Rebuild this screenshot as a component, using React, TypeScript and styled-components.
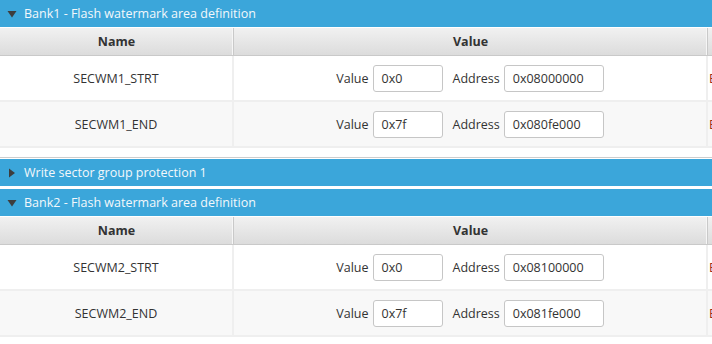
import React from "react";
import styled, { createGlobalStyle } from "styled-components";

const Global = createGlobalStyle`
  html, body { margin: 0; padding: 0; background: #ffffff; }
  body { font-family: "Open Sans", "Noto Sans", sans-serif; font-size: 12px; color: #333; }
`;

const Page = styled.div`
  width: 712px;
  height: 344px;
  overflow: hidden;
  display: flex;
  flex-direction: column;
  background: #fff;
`;

const Pane = styled.section<{ $gap: number }>`
  display: flex;
  flex-direction: column;
  margin-top: ${(p) => p.$gap}px;
`;

const PaneHeader = styled.div`
  height: 27px;
  background: #3ba6da;
  display: flex;
  align-items: center;
  gap: 7px;
  padding-left: 7px;
  color: #f3f8fb;
  font-size: 12.5px;
  white-space: nowrap;
`;

const Arrow = styled.svg`
  flex: none;
  width: 10px;
  height: 10px;
`;

const PaneBody = styled.div<{ $last?: boolean }>`
  display: flex;
  flex-direction: column;
  padding-bottom: ${(p) => (p.$last ? 0 : 9)}px;
  border-bottom: ${(p) => (p.$last ? "none" : "1px solid #cdcdcd")};
`;

const Table = styled.div`
  width: 900px;
  display: flex;
  flex-direction: column;
`;

const HeadRow = styled.div`
  display: grid;
  grid-template-columns: 234px 474px 1fr;
  height: 27px;
  border-top: 1px solid #ffffff;
  border-bottom: 1px solid #c9c9c9;
  background: linear-gradient(#f1f1f1, #dcdcdc);
`;

const HeadCell = styled.div`
  display: flex;
  align-items: center;
  justify-content: center;
  font-weight: bold;
  color: #333;
  font-size: 12.5px;
  border-right: 1px solid #c9c9c9;
  box-shadow: inset -1px 0 0 #f6f6f6;
  box-sizing: border-box;
`;

const Row = styled.div<{ $alt: boolean }>`
  display: grid;
  grid-template-columns: 234px 474px 1fr;
  height: 44px;
  border-bottom: 2px solid #efefef;
  background: ${(p) => (p.$alt ? "#f8f8f8" : "#ffffff")};
`;

const Cell = styled.div<{ $align?: "center" | "start" }>`
  display: flex;
  align-items: center;
  justify-content: ${(p) => (p.$align === "start" ? "flex-start" : "center")};
  border-right: 2px solid #efefef;
  box-sizing: border-box;
  color: #333;
  font-size: 12.5px;
  padding-left: ${(p) => (p.$align === "start" ? 1 : 0)}px;
  white-space: nowrap;
`;

const Field = styled.div`
  display: flex;
  align-items: center;
  gap: 4px;
`;

const Fields = styled.div`
  display: flex;
  align-items: center;
  gap: 10px;
`;

const Input = styled.div<{ $w: number }>`
  width: ${(p) => p.$w}px;
  height: 27px;
  box-sizing: border-box;
  border: 1px solid #c6c6c6;
  border-radius: 3px;
  background: #fff;
  display: flex;
  align-items: center;
  padding-left: 8px;
  font-size: 12.5px;
  color: #333;
`;

const ErrText = styled.span`
  color: #9b2b1b;
`;

const DownArrow = () => (
  <Arrow viewBox="0 0 10 10">
    <path d="M0.5 2 L9.5 2 L5 8.5 Z" fill="#3d3d3d" />
  </Arrow>
);

const RightArrow = () => (
  <Arrow viewBox="0 0 10 10">
    <path d="M2 0.5 L8 5 L2 9.5 Z" fill="#3d3d3d" />
  </Arrow>
);

type Reg = { name: string; value: string; address: string };

const WatermarkTable = ({ rows }: { rows: Reg[] }) => (
  <Table>
    <HeadRow>
      <HeadCell>Name</HeadCell>
      <HeadCell>Value</HeadCell>
      <HeadCell />
    </HeadRow>
    {rows.map((r, i) => (
      <Row key={r.name} $alt={i % 2 === 1}>
        <Cell>{r.name}</Cell>
        <Cell>
          <Fields>
            <Field>
              Value<Input $w={70}>{r.value}</Input>
            </Field>
            <Field>
              Address<Input $w={100}>{r.address}</Input>
            </Field>
          </Fields>
        </Cell>
        <Cell $align="start">
          <ErrText>Error</ErrText>
        </Cell>
      </Row>
    ))}
  </Table>
);

export default function App() {
  return (
    <>
      <Global />
      <Page>
        <Pane $gap={0}>
          <PaneHeader>
            <DownArrow />
            Bank1 - Flash watermark area definition
          </PaneHeader>
          <PaneBody>
            <WatermarkTable
              rows={[
                { name: "SECWM1_STRT", value: "0x0", address: "0x08000000" },
                { name: "SECWM1_END", value: "0x7f", address: "0x080fe000" },
              ]}
            />
          </PaneBody>
        </Pane>
        <Pane $gap={1}>
          <PaneHeader>
            <RightArrow />
            Write sector group protection 1
          </PaneHeader>
        </Pane>
        <Pane $gap={3}>
          <PaneHeader>
            <DownArrow />
            Bank2 - Flash watermark area definition
          </PaneHeader>
          <PaneBody $last>
            <WatermarkTable
              rows={[
                { name: "SECWM2_STRT", value: "0x0", address: "0x08100000" },
                { name: "SECWM2_END", value: "0x7f", address: "0x081fe000" },
              ]}
            />
          </PaneBody>
        </Pane>
      </Page>
    </>
  );
}
